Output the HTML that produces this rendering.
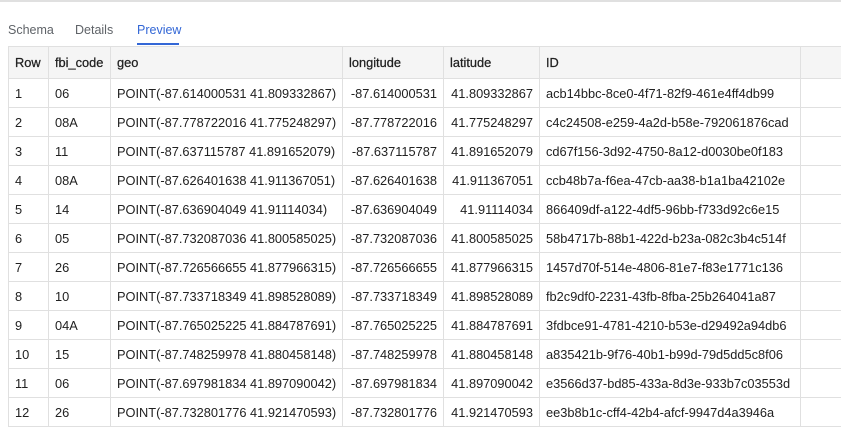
<!DOCTYPE html>
<html><head><meta charset="utf-8"><style>
*{margin:0;padding:0;box-sizing:border-box}
body{width:841px;height:425px;overflow:hidden;background:#fff;font-family:"Liberation Sans",Arial,sans-serif;color:#212121;position:relative}
.top{position:absolute;left:0;top:0;width:841px;height:2px;background:#e0e0e0}
.tab{position:absolute;top:23px;font-size:12.5px;color:#5f6368}
.tab.a{color:#3367d6}
.ul{position:absolute;left:137px;top:43px;width:42px;height:2px;background:#3367d6}
table{position:absolute;left:8px;top:46px;border-collapse:collapse;font-size:12.8px;table-layout:fixed;width:833px}
td,th{border:1px solid #e0e0e0;height:29px;padding:0 6px;white-space:nowrap;overflow:hidden;text-align:left}
th{height:32px;background:#f5f5f5;font-weight:normal;color:#212121;-webkit-text-stroke:0.25px #212121}
td.r{text-align:right}
tr>*:last-child{border-right:none}
</style></head><body>
<div class="top"></div>
<div class="tab" style="left:8px">Schema</div>
<div class="tab" style="left:75px">Details</div>
<div class="tab a" style="left:137px">Preview</div>
<div class="ul"></div>
<table>
<colgroup><col style="width:40px"><col style="width:62px"><col style="width:232px"><col style="width:101px"><col style="width:96px"><col style="width:261px"><col></colgroup>
<tr><th>Row</th><th>fbi_code</th><th>geo</th><th>longitude</th><th>latitude</th><th>ID</th><th></th></tr>
<tr><td>1</td><td>06</td><td>POINT(-87.614000531 41.809332867)</td><td class="r">-87.614000531</td><td class="r">41.809332867</td><td>acb14bbc-8ce0-4f71-82f9-461e4ff4db99</td><td></td></tr>
<tr><td>2</td><td>08A</td><td>POINT(-87.778722016 41.775248297)</td><td class="r">-87.778722016</td><td class="r">41.775248297</td><td>c4c24508-e259-4a2d-b58e-792061876cad</td><td></td></tr>
<tr><td>3</td><td>11</td><td>POINT(-87.637115787 41.891652079)</td><td class="r">-87.637115787</td><td class="r">41.891652079</td><td>cd67f156-3d92-4750-8a12-d0030be0f183</td><td></td></tr>
<tr><td>4</td><td>08A</td><td>POINT(-87.626401638 41.911367051)</td><td class="r">-87.626401638</td><td class="r">41.911367051</td><td>ccb48b7a-f6ea-47cb-aa38-b1a1ba42102e</td><td></td></tr>
<tr><td>5</td><td>14</td><td>POINT(-87.636904049 41.91114034)</td><td class="r">-87.636904049</td><td class="r">41.91114034</td><td>866409df-a122-4df5-96bb-f733d92c6e15</td><td></td></tr>
<tr><td>6</td><td>05</td><td>POINT(-87.732087036 41.800585025)</td><td class="r">-87.732087036</td><td class="r">41.800585025</td><td>58b4717b-88b1-422d-b23a-082c3b4c514f</td><td></td></tr>
<tr><td>7</td><td>26</td><td>POINT(-87.726566655 41.877966315)</td><td class="r">-87.726566655</td><td class="r">41.877966315</td><td>1457d70f-514e-4806-81e7-f83e1771c136</td><td></td></tr>
<tr><td>8</td><td>10</td><td>POINT(-87.733718349 41.898528089)</td><td class="r">-87.733718349</td><td class="r">41.898528089</td><td>fb2c9df0-2231-43fb-8fba-25b264041a87</td><td></td></tr>
<tr><td>9</td><td>04A</td><td>POINT(-87.765025225 41.884787691)</td><td class="r">-87.765025225</td><td class="r">41.884787691</td><td>3fdbce91-4781-4210-b53e-d29492a94db6</td><td></td></tr>
<tr><td>10</td><td>15</td><td>POINT(-87.748259978 41.880458148)</td><td class="r">-87.748259978</td><td class="r">41.880458148</td><td>a835421b-9f76-40b1-b99d-79d5dd5c8f06</td><td></td></tr>
<tr><td>11</td><td>06</td><td>POINT(-87.697981834 41.897090042)</td><td class="r">-87.697981834</td><td class="r">41.897090042</td><td>e3566d37-bd85-433a-8d3e-933b7c03553d</td><td></td></tr>
<tr><td>12</td><td>26</td><td>POINT(-87.732801776 41.921470593)</td><td class="r">-87.732801776</td><td class="r">41.921470593</td><td>ee3b8b1c-cff4-42b4-afcf-9947d4a3946a</td><td></td></tr>
</table>
</body></html>
